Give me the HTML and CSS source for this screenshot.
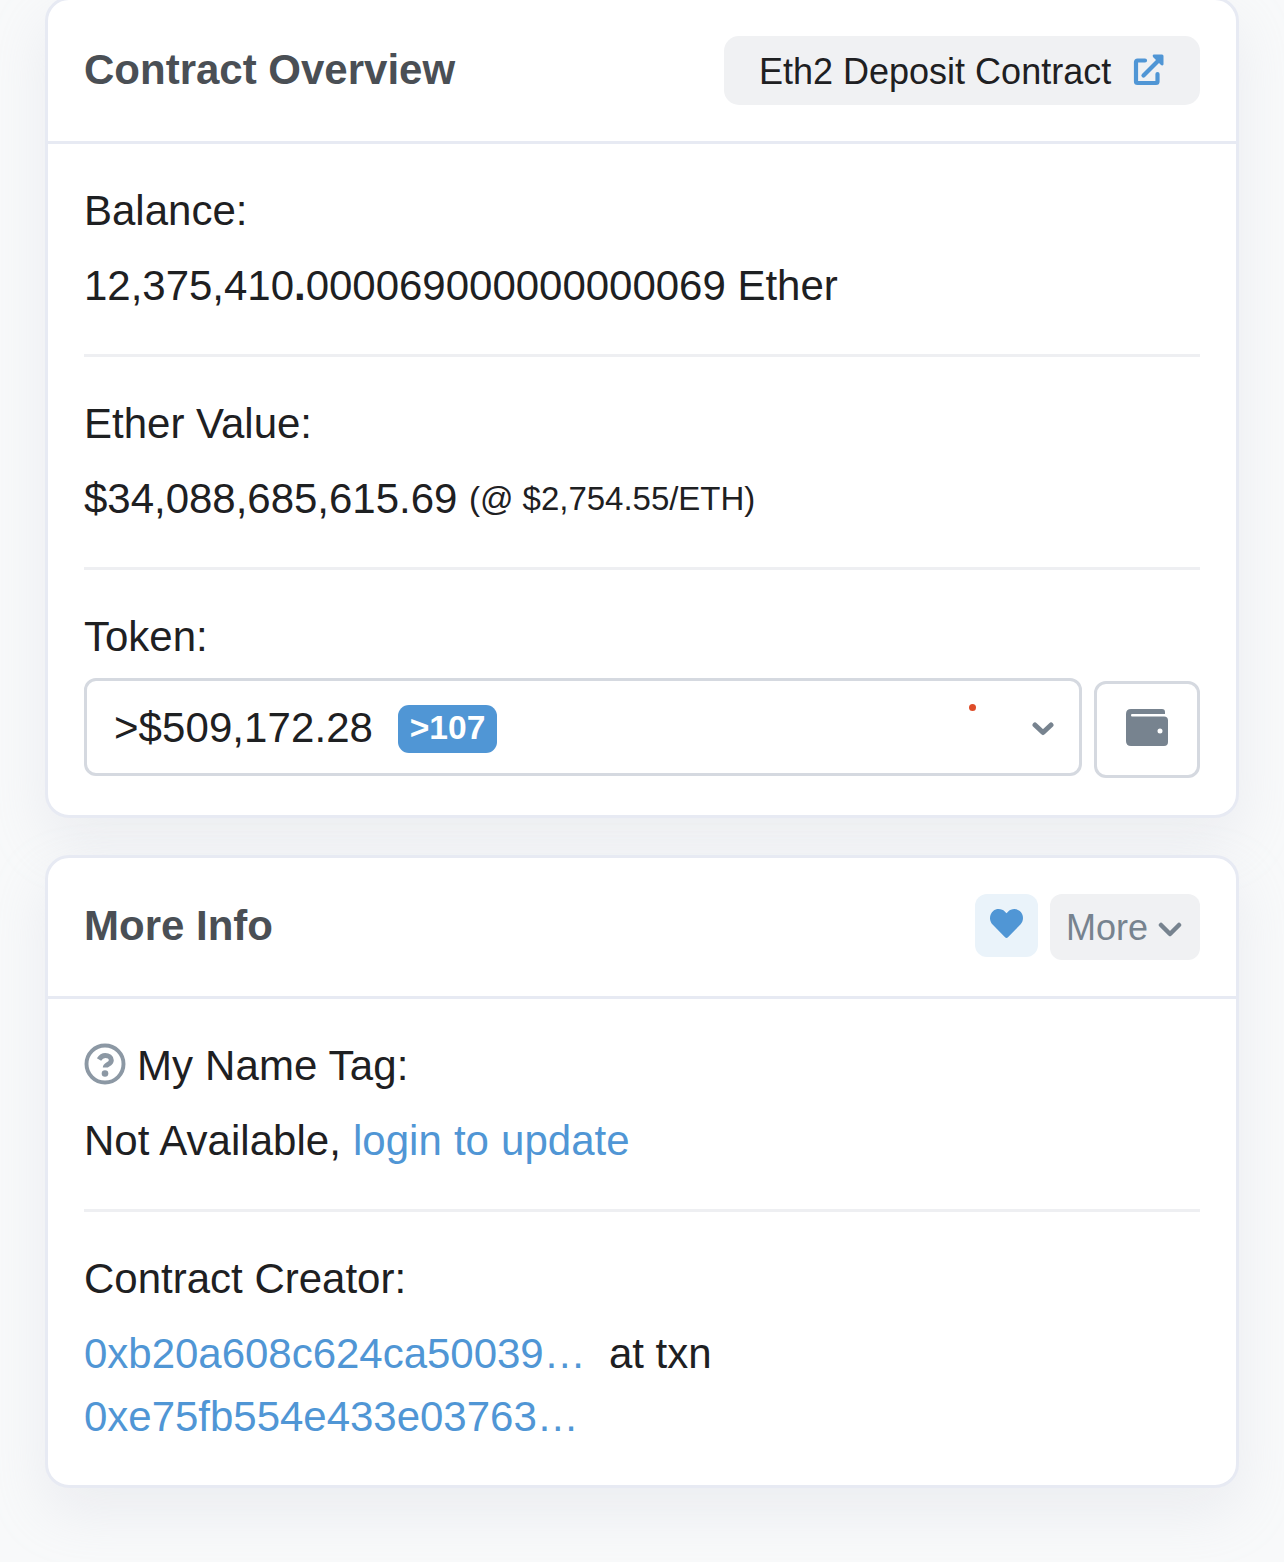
FILE: index.html
```html
<!DOCTYPE html>
<html lang="en">
<head>
<meta charset="utf-8">
<title>Contract Overview</title>
<link rel="stylesheet" href="styles.css">
</head>
<body>
<main class="page">
  <section class="card">
    <header class="card-header">
      <h2 class="card-title">Contract Overview</h2>
      <a class="btn btn-deposit">Eth2 Deposit Contract
        <svg class="icon-external" viewBox="0 0 32 32" fill="none" stroke="currentColor" stroke-width="4.200"><path d="M13 6.500H5.500Q4 6.500 4 8V27.500Q4 29 5.500 29H24Q25.500 29 25.500 27.500V20" stroke-linecap="round"/><path d="M11.500 21.500L27 6" stroke-linecap="round"/><path d="M21.500 0.500H30Q31.500 0.500 31.500 2V10.500Q30.500 12 29 11L21 3Q20 1 21.500 0.500Z" fill="currentColor" stroke="none"/></svg>
      </a>
    </header>
    <div class="card-body">
      <div class="row">
        <div class="label">Balance:</div>
        <div class="value">12,375,410<b>.</b>000069000000000069 Ether</div>
      </div>
      <div class="row">
        <div class="label">Ether Value:</div>
        <div class="value">$34,088,685,615.69 <span class="small">(@ $2,754.55/ETH)</span></div>
      </div>
      <div class="row row-token">
        <div class="label">Token:</div>
        <div class="token-controls">
          <div class="token-select">
            <span class="amount">&gt;$509,172.28</span>
            <span class="badge">&gt;107</span>
            <span class="dot"></span>
            <svg class="icon-select" viewBox="0 0 22 14" fill="none" stroke="currentColor" stroke-width="5" stroke-linecap="round" stroke-linejoin="round"><path d="M3 3L11 10.500L19 3"/></svg>
          </div>
          <button class="wallet" aria-label="Wallet">
            <svg class="icon-wallet" viewBox="0 0 42 37" fill="currentColor"><path fill-rule="evenodd" d="M5 0H36Q39 0 39 3V5H6Q5 5 5 6.300Q5 7.500 6 7.500H38Q42 7.500 42 11.500V33Q42 37 38 37H5Q0 37 0 32V5Q0 0 5 0ZM34 19.500A2.500 2.500 0 1 0 34 24.500A2.500 2.500 0 1 0 34 19.500Z"/></svg>
          </button>
        </div>
      </div>
    </div>
  </section>

  <section class="card">
    <header class="card-header header-info">
      <h2 class="card-title">More Info</h2>
      <div class="actions">
        <button class="btn-heart" aria-label="Favourite">
          <svg class="icon-heart" viewBox="0 0 512 512" fill="currentColor"><path d="M462.300 62.600C407.500 15.900 326 24.300 275.700 76.200L256 96.500l-19.700-20.300C186.100 24.300 104.500 15.900 49.700 62.600c-62.800 53.600-66.100 149.800-9.900 207.900l193.500 199.800c12.500 12.900 32.800 12.900 45.300 0l193.500-199.800c56.300-58.100 53-154.300-9.800-207.900z"/></svg>
        </button>
        <button class="btn-more">More
          <svg class="icon-more" viewBox="0 0 24 15" fill="none" stroke="currentColor" stroke-width="4.500" stroke-linecap="round" stroke-linejoin="round"><path d="M3 3L12 12L21 3"/></svg>
        </button>
      </div>
    </header>
    <div class="card-body">
      <div class="row">
        <div class="label label-icon">
          <svg class="icon-help" viewBox="0 0 42 42" fill="none" stroke="currentColor"><circle cx="21" cy="21" r="18.500" stroke-width="3.900"/><path d="M15 16.500Q17.500 12.500 21.300 12.500C24.500 12.500 27.300 14.500 27.300 17.300C27.300 21.500 21.300 21.300 21.300 24.600" stroke-width="5" stroke-linejoin="round"/><circle cx="21" cy="30.500" r="3.300" fill="currentColor" stroke="none"/></svg>
          <span>My Name Tag:</span>
        </div>
        <div class="value name-value">Not Available, <a class="link">login to update</a></div>
      </div>
      <div class="row">
        <div class="label">Contract Creator:</div>
        <div class="value"><a class="link">0xb20a608c624ca50039…</a>&nbsp; at txn<br><a class="link">0xe75fb554e433e03763…</a></div>
      </div>
    </div>
  </section>
</main>
</body>
</html>
```
FILE: styles.css
```css
* { box-sizing: border-box; }
body {
  margin: 0;
  height: 1562px;
  overflow: hidden;
  background: #f8f9fa;
  color: #1e2022;
  font: 42px/63px "Liberation Sans", Arial, sans-serif;
}
.page {
  display: flex;
  flex-direction: column;
  gap: 37px;
  width: 1194px;
  margin: -3px 0 0 45px;
}
.card {
  background: #fff;
  border: 3px solid #e7eaf3;
  border-radius: 24px;
  box-shadow: 0 24px 56px rgba(189, 197, 209, .22);
}
.card-header {
  display: flex;
  justify-content: space-between;
  align-items: flex-start;
  padding: 36px;
  border-bottom: 3px solid #e7eaf3;
}
.card-title {
  margin: 0;
  padding-top: 2px;
  font-size: 42px;
  line-height: 63px;
  height: 65px;
  color: #4a4f55;
}
.header-info .card-title { padding-top: 0; }
.btn {
  display: flex;
  align-items: center;
  justify-content: space-between;
  width: 476px;
  height: 69px;
  padding: 2px 36px 0 35px;
  border-radius: 15px;
  background: #f0f1f3;
  font-size: 36px;
}
.icon-external { width: 32px; height: 32px; margin-top: -4px; color: #5096d5; }
.card-body { padding: 0 36px; }
.row { padding: 35px 0 37px; }
.row + .row { border-top: 3px solid #eeeff2; }
.label { margin-bottom: 12px; }
.value { letter-spacing: -.02px; }
.small {
  position: relative;
  top: -3px;
  font-size: 33px;
  line-height: 1;
}
.row-token { padding-bottom: 37px; }
.row-token .label { margin-bottom: 10px; }
.token-controls { display: flex; align-items: flex-start; gap: 12px; }
.token-select {
  position: relative;
  display: flex;
  align-items: center;
  width: 998px;
  height: 98px;
  padding: 0 26px 0 27px;
  border: 3px solid #d5d9e0;
  border-radius: 12px;
}
.amount { letter-spacing: .08px; }
.badge {
  width: 99px;
  height: 48px;
  margin: 4px 0 0 25px;
  border-radius: 11px;
  background: #5096d5;
  color: #fff;
  font-size: 33.6px;
  font-weight: 700;
  line-height: 46px;
  text-align: center;
}
.dot {
  position: absolute;
  left: 882px;
  top: 23px;
  width: 7px;
  height: 7px;
  border-radius: 50%;
  background: #de4c28;
}
.icon-select { width: 22px; height: 14px; margin: 4px -1px 0 auto; color: #77838f; }
.wallet {
  display: flex;
  align-items: center;
  justify-content: center;
  width: 106px;
  height: 97px;
  margin-top: 3px;
  padding: 0 0 4px;
  border: 3px solid #d5d9e0;
  border-radius: 12px;
  background: #fff;
  color: #77838f;
}
.icon-wallet { width: 42px; height: 37px; }
.actions { display: flex; align-items: flex-start; gap: 12px; }
.btn-heart {
  display: flex;
  align-items: center;
  justify-content: center;
  width: 63px;
  height: 63px;
  padding: 0 0 4px;
  border: 0;
  border-radius: 12px;
  background: #eaf3fa;
  color: #5096d5;
}
.icon-heart { width: 33px; height: 33px; }
.btn-more {
  display: flex;
  align-items: center;
  justify-content: space-between;
  width: 150px;
  height: 66px;
  padding: 0 18px 0 16px;
  border: 0;
  border-radius: 12px;
  background: #f0f1f3;
  color: #77838f;
  font: 36px/63px "Liberation Sans", Arial, sans-serif;
}
.icon-more { width: 24px; height: 15px; margin-top: 4px; }
.label-icon { display: flex; align-items: center; gap: 11px; letter-spacing: .12px; }
.icon-help { width: 42px; height: 42px; margin-top: -4px; color: #8c98a4; }
.name-value { letter-spacing: .04px; word-spacing: .3px; }
.link { color: #5096d5; }
```
